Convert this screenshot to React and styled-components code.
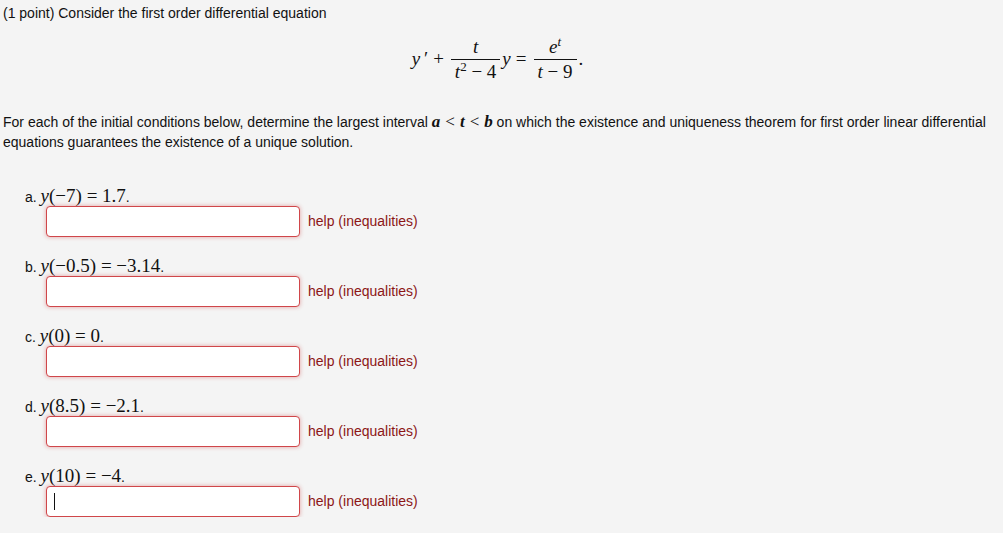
import React from 'react'
import styled, { createGlobalStyle } from 'styled-components'

const GlobalStyle = createGlobalStyle`
  body {
    margin: 0;
    background: #f4f4f4;
    font-family: "Liberation Sans", Arial, sans-serif;
    font-size: 14px;
    color: #111;
  }
`;

const MATH = '"Liberation Serif", "Times New Roman", serif';

const Page = styled.div`
  padding: 4px 3px 0 3px;
`;

const Heading = styled.div`
  line-height: 18px;
`;

const EquationRow = styled.div`
  display: flex;
  justify-content: center;
  align-items: center;
  height: 50px;
  margin-top: 12px;
  padding-right: 8px;
  font-family: ${MATH};
  font-size: 19px;
  line-height: 20px;
`;

const Var = styled.span`
  font-style: italic;
`;

const Op = styled.span`
  margin: 0 5px;
`;

const Frac = styled.span`
  display: inline-flex;
  flex-direction: column;
  align-items: stretch;
  margin: 0 2px;
  text-align: center;
`;

const Num = styled.span`
  display: block;
  padding: 0 4px 2px;
  border-bottom: 1px solid #111;
`;

const Den = styled.span`
  display: block;
  padding: 2px 4px 0;
`;

const Sup = styled.sup`
  font-size: 13px;
  vertical-align: 7px;
  line-height: 0;
`;

const Para = styled.p`
  margin: 28px 0 0 0;
  line-height: 20px;
`;

const InlineMath = styled.span`
  font-family: ${MATH};
  font-size: 17px;
  line-height: 1;
  font-weight: ${(p) => (p.$bold ? 'bold' : 'normal')};
  font-style: ${(p) => (p.$bold ? 'italic' : 'normal')};
  margin: ${(p) => (p.$rel ? '0 5px' : '0')};
`;

const List = styled.div`
  margin-top: 34px;
  display: flex;
  flex-direction: column;
  gap: 19px;
`;

const Item = styled.div`
  padding-left: 22px;
`;

const Label = styled.div`
  height: 20px;
  line-height: 20px;
  font-size: 14px;
  white-space: nowrap;
`;

const LabelMath = styled.span`
  font-family: ${MATH};
  font-size: 19px;
  line-height: 1;
`;

const AnswerRow = styled.div`
  display: flex;
  align-items: center;
  gap: 8px;
  padding-left: 21px;
`;

const Input = styled.input`
  box-sizing: border-box;
  width: 254px;
  height: 31px;
  border: 1px solid #d0464a;
  border-radius: 4px;
  background: #fff;
  box-shadow: 0 0 4px rgba(205, 60, 60, 0.45);
  outline: none;
  padding: 0 8px;
  font-size: 15px;
`;

const Field = styled.div`
  box-sizing: border-box;
  width: 254px;
  height: 31px;
  border: 1px solid #d0464a;
  border-radius: 4px;
  background: #fff;
  box-shadow: 0 0 4px rgba(205, 60, 60, 0.45);
  display: flex;
  align-items: center;
  padding-left: 7px;
`;

const Caret = styled.span`
  display: inline-block;
  width: 1px;
  height: 17px;
  background: #111;
`;

const Help = styled.a`
  color: #8c1616;
  text-decoration: none;
  font-size: 14px;
  margin-top: -2px;
`;

const items = [
  { key: 'a', arg: '−7', val: '1.7' },
  { key: 'b', arg: '−0.5', val: '−3.14' },
  { key: 'c', arg: '0', val: '0' },
  { key: 'd', arg: '8.5', val: '−2.1' },
  { key: 'e', arg: '10', val: '−4', focus: true },
];

function App() {
  return (
    <Page>
      <GlobalStyle />
      <Heading>(1 point) Consider the first order differential equation</Heading>
      <EquationRow>
        <Var>y</Var>&thinsp;′<Op>+</Op>
        <Frac>
          <Num><Var>t</Var></Num>
          <Den><Var>t</Var><Sup>2</Sup> − 4</Den>
        </Frac>
        <Var>y</Var><Op>=</Op>
        <Frac>
          <Num><Var>e</Var><Sup><Var>t</Var></Sup></Num>
          <Den><Var>t</Var> − 9</Den>
        </Frac>
        <span>.</span>
      </EquationRow>
      <Para>
        For each of the initial conditions below, determine the largest interval{' '}
        <InlineMath $bold>a</InlineMath><InlineMath $rel>&lt;</InlineMath><InlineMath $bold>t</InlineMath><InlineMath $rel>&lt;</InlineMath><InlineMath $bold>b</InlineMath>{' '}
        on which the existence and uniqueness theorem for first order linear differential equations guarantees the existence of a unique solution.
      </Para>
      <List>
        {items.map((it) => (
          <Item key={it.key}>
            <Label>
              {it.key}.{' '}
              <LabelMath>
                <Var>y</Var>({it.arg}) = {it.val}
              </LabelMath>
              .
            </Label>
            <AnswerRow>
              {it.focus ? (
                <Field><Caret /></Field>
              ) : (
                <Input type="text" />
              )}
              <Help href="#">help (inequalities)</Help>
            </AnswerRow>
          </Item>
        ))}
      </List>
    </Page>
  )
}

export default App;
